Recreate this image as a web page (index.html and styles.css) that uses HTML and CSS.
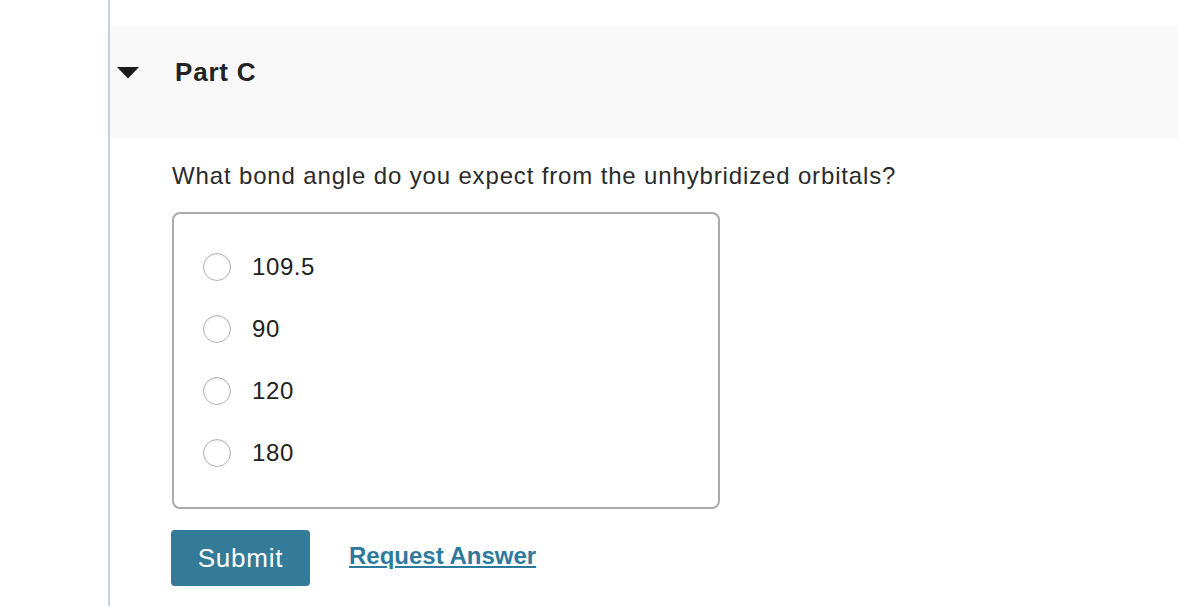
FILE: index.html
```html
<!DOCTYPE html>
<html>
<head>
<meta charset="utf-8">
<link rel="stylesheet" href="styles.css">
</head>
<body>
<div class="page">
  <div class="part-header">
    <svg class="caret" width="22" height="12" viewBox="0 0 22 12"><polygon points="0,0 22,0 11,11.5" fill="#1a1a1a"/></svg>
    <h2 class="part-title">Part C</h2>
  </div>
  <div class="part-body">
    <p class="question">What bond angle do you expect from the unhybridized orbitals?</p>
    <div class="choices">
      <label class="choice"><span class="radio"></span><span class="choice-text">109.5</span></label>
      <label class="choice"><span class="radio"></span><span class="choice-text">90</span></label>
      <label class="choice"><span class="radio"></span><span class="choice-text">120</span></label>
      <label class="choice"><span class="radio"></span><span class="choice-text">180</span></label>
    </div>
    <div class="actions">
      <button class="submit">Submit</button>
      <a class="request" href="#">Request Answer</a>
    </div>
  </div>
</div>
</body>
</html>
```
FILE: styles.css
```css
html, body {
  margin: 0;
  padding: 0;
  background: #ffffff;
}
body {
  font-family: "Liberation Sans", Arial, Helvetica, sans-serif;
  color: #2b2b2b;
}
.page {
  margin-left: 108px;
  border-left: 2px solid #c5d1dd;
  min-height: 606px;
  padding-top: 26px;
  box-sizing: border-box;
}
.part-header {
  height: 112px;
  background: #f8f8f8;
  display: flex;
  align-items: center;
  padding-left: 7px;
  padding-bottom: 20px;
  box-sizing: border-box;
}
.caret {
  display: block;
  margin-top: 2px;
}
.part-title {
  margin: 0 0 0 36px;
  font-size: 26px;
  font-weight: bold;
  letter-spacing: 0.8px;
  color: #222;
}
.part-body {
  padding-left: 62px;
}
.question {
  margin: 22px 0 0 0;
  font-size: 24px;
  line-height: 32px;
  letter-spacing: 0.85px;
  color: #2b2b2b;
}
.choices {
  margin-top: 20px;
  width: 548px;
  height: 297px;
  box-sizing: border-box;
  border: 2px solid #ababab;
  border-radius: 8px;
  padding: 22px 0 0 29px;
  display: flex;
  flex-direction: column;
}
.choice {
  display: flex;
  align-items: center;
  height: 62px;
}
.radio {
  width: 28px;
  height: 28px;
  border-radius: 50%;
  border: 1px solid #b3b3b3;
  box-sizing: border-box;
  background: #fff;
  box-shadow: inset 0 1px 2px rgba(0,0,0,0.1);
}
.choice-text {
  margin-left: 21px;
  font-size: 24px;
  letter-spacing: 0.6px;
  color: #222;
}
.actions {
  margin-top: 21px;
  display: flex;
  align-items: center;
}
.submit {
  width: 139px;
  height: 56px;
  margin-left: -1px;
  background: #347a99;
  color: #fff;
  border: none;
  border-radius: 4px;
  font-family: "Liberation Sans", Arial, sans-serif;
  font-size: 26px;
  letter-spacing: 0.8px;
  padding: 0;
}
.request {
  margin-left: 39px;
  margin-top: -4px;
  font-size: 24px;
  font-weight: bold;
  color: #2e7a9d;
  text-decoration: underline;
}
```
